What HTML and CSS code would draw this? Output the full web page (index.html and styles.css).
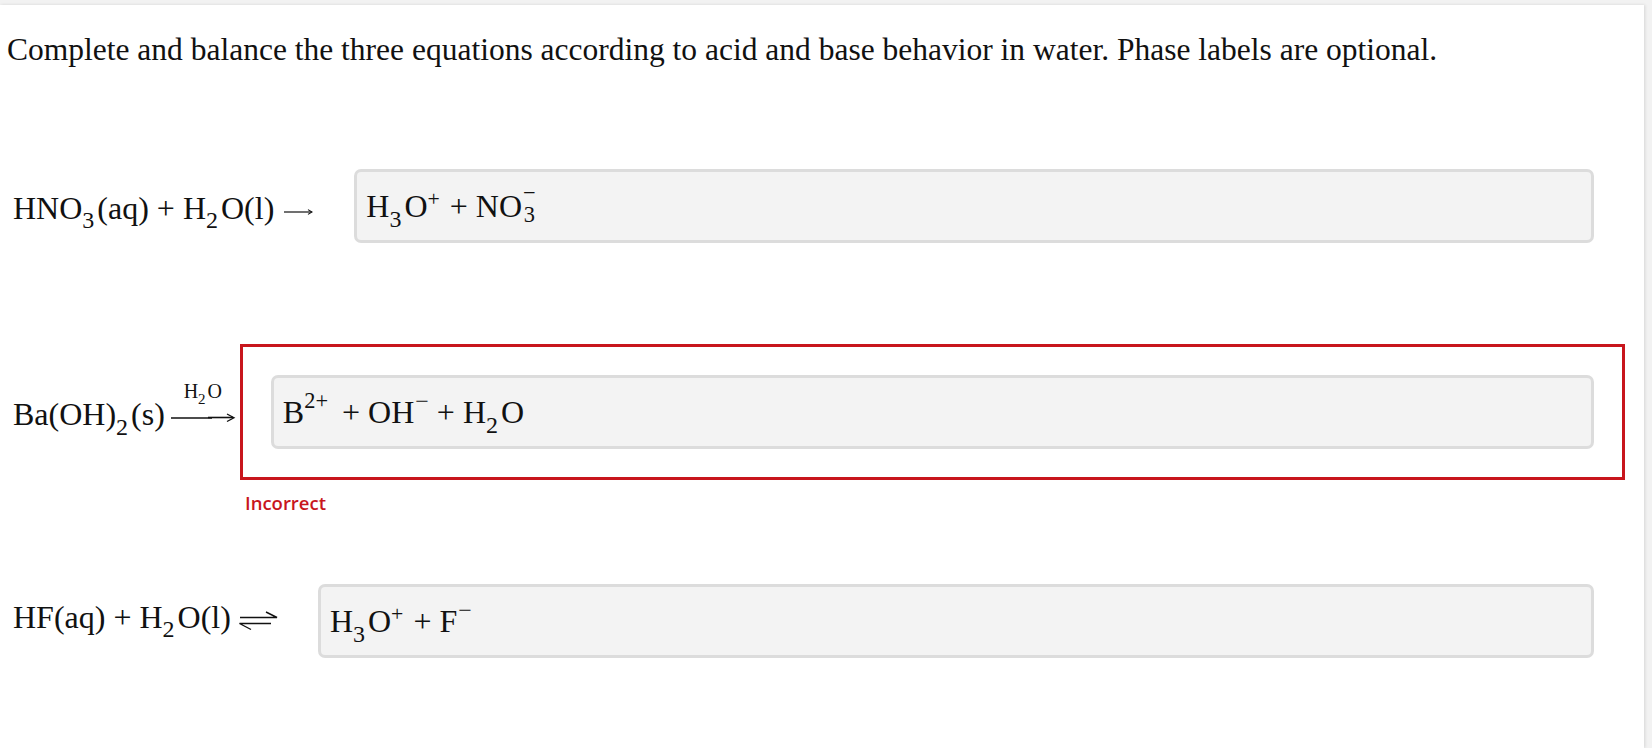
FILE: index.html
```html
<!DOCTYPE html>
<html lang="en">
<head>
    <meta charset="UTF-8">
    <title>Acid and Base Equations</title>
    <link rel="stylesheet" href="styles.css">
</head>
<body>
    <div class="page">
        <p class="prompt">Complete and balance the three equations according to acid and base behavior in water. Phase labels are optional.</p>

        <div class="eq eq-acid">
            <div class="lhs">HNO<sub>3</sub>(aq) + H<sub>2</sub>O(l)<svg class="arrow-short" width="30" height="10" viewBox="0 0 30 10">
                    <path d="M1 5 H28.5" stroke="#111" stroke-width="1.2" fill="none"/>
                    <path d="M25 2.6 L29 5 L25 7.4" stroke="#111" stroke-width="1.1" fill="none"/>
                </svg></div>
            <div class="answer">
                <div class="field">H<sub>3</sub>O<sup class="ch">+</sup><span class="sp wide"></span>+ NO<span class="stack"><span>&minus;</span><span>3</span></span></div>
            </div>
        </div>

        <div class="eq eq-base">
            <div class="lhs">Ba(OH)<sub>2</sub>(s)<span class="over-arrow">
                    <span class="over">H<sub>2</sub>O</span>
                    <svg width="66" height="12" viewBox="0 0 66 12">
                        <path d="M1 6 H42" stroke="#111" stroke-width="1.3" fill="none"/>
                        <path d="M38 5.5 H63" stroke="#111" stroke-width="1.6" fill="none"/>
                        <path d="M57 2 L64 5.7 L57 9.5" stroke="#111" stroke-width="1.3" fill="none"/>
                    </svg>
                </span></div>
            <div class="answer incorrect">
                <div class="field">B<sup>2+</sup><span class="sp"></span>+ OH<sup class="ch minus">&minus;</sup><span class="sp narrow"></span>+ H<sub>2</sub>O</div>
            </div>
        </div>
        <div class="feedback">Incorrect</div>

        <div class="eq eq-weak">
            <div class="lhs">HF(aq) + H<sub>2</sub>O(l)<svg class="arrow-eq" width="40" height="22" viewBox="0 0 40 22">
                    <path d="M2 8.5 H39 L28 3" stroke="#111" stroke-width="1.4" fill="none"/>
                    <path d="M33 14.5 H1.5 L13 20.5" stroke="#111" stroke-width="1.4" fill="none"/>
                </svg></div>
            <div class="answer">
                <div class="field">H<sub>3</sub>O<sup class="ch">+</sup><span class="sp wide"></span>+ F<sup class="ch minus">&minus;</sup></div>
            </div>
        </div>
    </div>
</body>
</html>
```

FILE: styles.css
```css
body {
    margin: 0;
    padding: 0;
    background: #f2f2f2;
    font-family: 'Liberation Serif', 'Times New Roman', serif;
    color: #111;
    overflow: hidden;
}

.page {
    margin: 5px 8px 0 0;
    min-height: calc(100vh - 5px);
    background: #fff;
    box-shadow: 1px 0 3px rgba(0, 0, 0, 0.12);
    padding: 0 19px 0 0;
    box-sizing: border-box;
}

.prompt {
    margin: 0;
    padding: 27px 0 0 7px;
    font-size: 31.5px;
    line-height: 36px;
}

.eq {
    display: flex;
    align-items: center;
    padding-left: 13px;
}

.eq-acid { margin-top: 70px; }
.eq-base { margin-top: 70px; }
.eq-weak { margin-top: 38px; }

.lhs {
    font-size: 32px;
    line-height: 40px;
    padding-top: 3px;
    white-space: nowrap;
}

.eq-base .lhs {
    padding-top: 0;
    padding-bottom: 11px;
}

.eq-weak .lhs {
    padding-top: 0;
    padding-bottom: 9px;
}

sub, sup {
    line-height: 0;
}

sub {
    font-size: 0.75em;
    vertical-align: -0.4em;
    margin-right: 3px;
}

sup {
    font-size: 0.7em;
    vertical-align: 0.65em;
}

sup.ch {
    font-size: 0.68em;
    vertical-align: 0.52em;
}

sup.ch.minus {
    font-size: 0.75em;
    vertical-align: 14px;
    margin-left: 1px;
}

.stack {
    display: inline-flex;
    flex-direction: column;
    align-items: center;
    font-size: 0.7em;
    line-height: 1;
    vertical-align: 17px;
    margin-left: 1px;
}

.sp {
    display: inline-block;
    width: 14px;
}

.sp.wide { width: 10px; }
.sp.narrow { width: 8px; }

.arrow-short {
    margin-left: 9px;
    vertical-align: 2px;
}

.over-arrow {
    display: inline-flex;
    flex-direction: column;
    align-items: center;
    margin-left: 5px;
    vertical-align: 27px;
}

.over {
    font-size: 20px;
    line-height: 24px;
    margin-bottom: 9px;
}

.over sub {
    margin-right: 2px;
}

.arrow-eq {
    margin-left: 7px;
    vertical-align: -3px;
}

.answer {
    flex: 1;
    border: 3px solid transparent;
    padding: 28px;
    margin-left: 4px;
}

.eq-acid .answer { margin-left: 10px; }
.eq-weak .answer { margin-left: 9px; }

.answer.incorrect {
    border-color: #c8161d;
}

.field {
    height: 68px;
    line-height: 68px;
    padding: 0 9px;
    border: 3px solid #dcdcdc;
    border-radius: 7px;
    background: #f3f3f3;
    font-size: 32px;
    white-space: nowrap;
}

.feedback {
    margin: 11px 0 0 245px;
    font-family: 'Open Sans', 'Noto Sans', sans-serif;
    font-weight: 600;
    font-size: 18.5px;
    line-height: 24px;
    color: #c8161d;
}
```
